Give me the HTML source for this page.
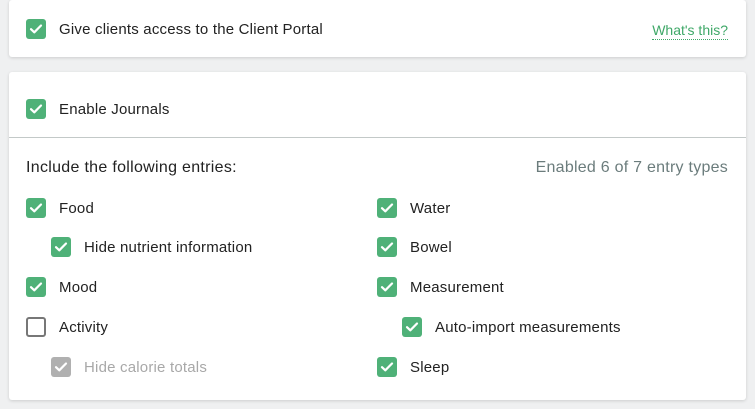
<!DOCTYPE html>
<html><head><style>
body{margin:0;width:755px;height:409px;background:#eff0f1;font-family:"Liberation Sans",sans-serif;position:relative;overflow:hidden;color:#222}
.card{position:absolute;left:9px;width:737px;background:#fff;border-radius:3px;box-shadow:0 1px 3px rgba(0,0,0,.15)}
.cb{position:absolute;width:20px;height:20px;border-radius:3px;background:#4fb178;box-sizing:border-box}
.cb svg{position:absolute;left:3px;top:4px}
.cb.off{background:#fff;border:2px solid #777}
.cb.dis{background:#b0b0b0}
.t{position:absolute;font-size:15px;letter-spacing:.2px;line-height:20px;white-space:nowrap}
</style></head><body>
<div class="card" style="top:0;height:57px"></div>
<div class="card" style="top:72px;height:328px"></div>
<div style="position:absolute;left:9px;width:737px;top:137px;height:1px;background:#c3c9c8"></div>

<div id="c"></div>
<script>
const ck='<svg width="14" height="12" viewBox="0 0 14 12"><path d="M2 6.2 L5.3 9.3 L12 2.5" fill="none" stroke="#fff" stroke-width="2.2" stroke-linecap="round" stroke-linejoin="round"/></svg>';
const items=[
[26,19,"Give clients access to the Client Portal",""],
[26,99,"Enable Journals",""],
[26,198,"Food",""],[51,237,"Hide nutrient information",""],[26,277,"Mood",""],[26,317,"Activity","off"],[51,357,"Hide calorie totals","dis"],
[377,198,"Water",""],[377,237,"Bowel",""],[377,277,"Measurement",""],[402,317,"Auto-import measurements",""],[377,357,"Sleep",""]];
let h='';
for(const [x,y,t,c] of items){
h+=`<div class="cb ${c}" style="left:${x}px;top:${y}px">${c=='off'?'':ck}</div>`;
h+=`<div class="t" style="left:${x+33}px;top:${y+1}px;${c=='dis'?'color:#a8a8a8':''}">${t}</div>`;
}
document.getElementById('c').innerHTML=h;
</script>
<div class="t" style="left:26px;top:158px;font-size:16px;letter-spacing:.3px">Include the following entries:</div>
<div class="t" style="right:27px;top:158px;font-size:16px;letter-spacing:.25px;color:#6b7c7c">Enabled 6 of 7 entry types</div>
<div class="t" style="right:27px;top:22px;font-size:14px;letter-spacing:0;color:#3fa868;border-bottom:1px dotted #3fa868;line-height:17px">What's this?</div>
</body></html>
